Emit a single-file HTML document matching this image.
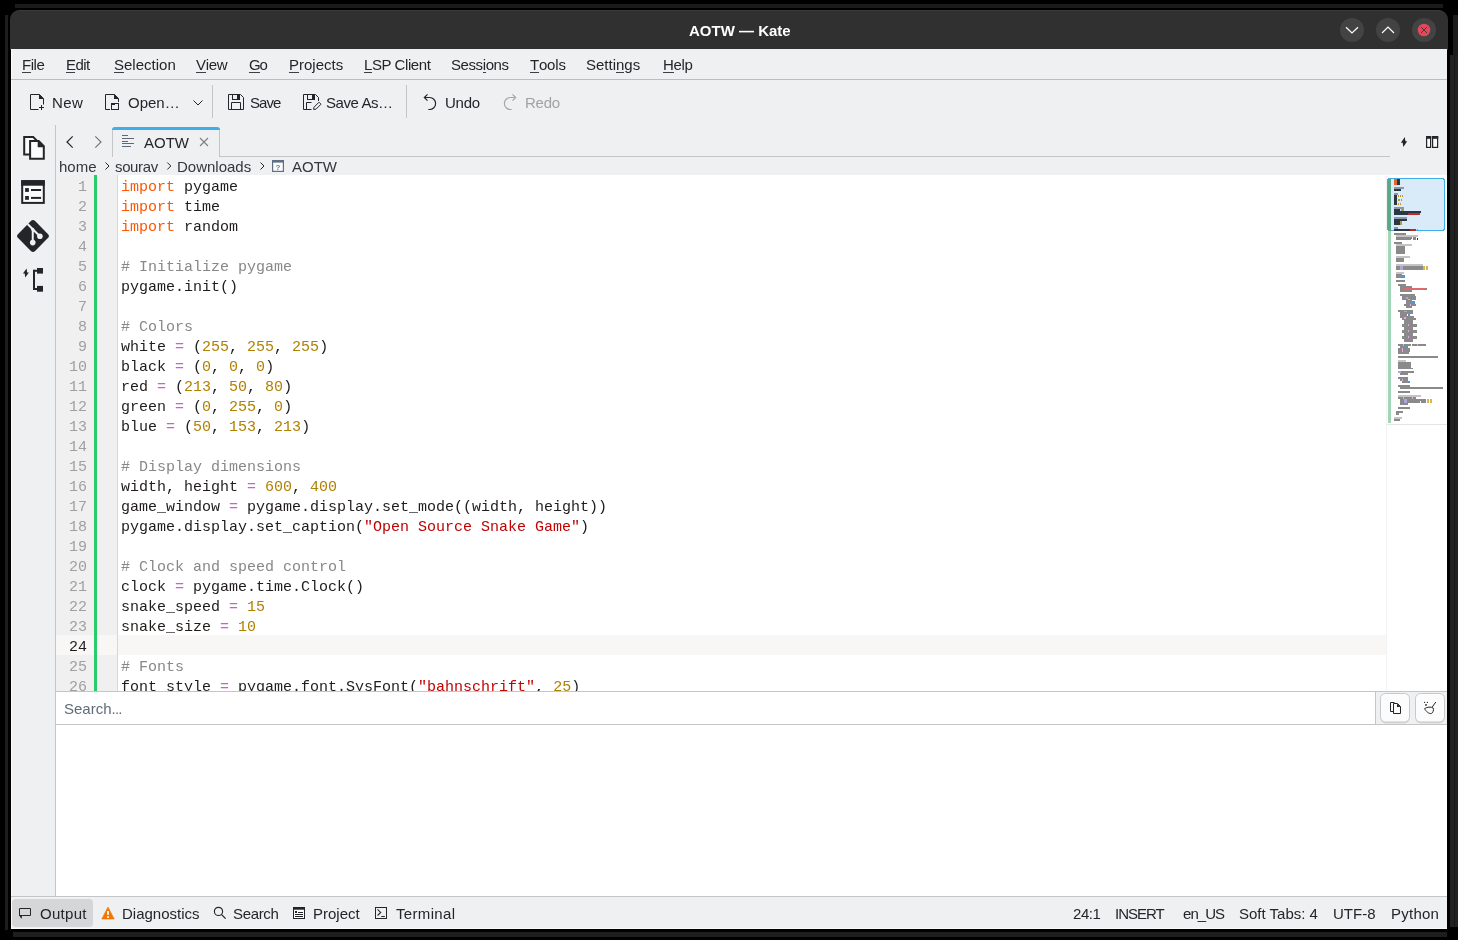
<!DOCTYPE html>
<html><head><meta charset="utf-8">
<style>
*{margin:0;padding:0;box-sizing:border-box}
html,body{width:1458px;height:940px;overflow:hidden;background:#000}
body{position:relative;font-family:"Liberation Sans",sans-serif;color:#232629}
.a{position:absolute}
.t{position:absolute;font-size:15px;line-height:17px;white-space:pre;color:#232629;will-change:transform}
.win{position:absolute;left:10px;top:10px;width:1437px;height:919px;background:#eff0f1;border-radius:8px 8px 0 0;overflow:hidden}
.title{position:absolute;left:0;top:0;width:1437px;height:39px;background:#303030}
.hl{position:absolute;height:1px;background:#c4c5c6}
.vl{position:absolute;width:1px;background:#c4c5c6}
.code{will-change:transform;position:absolute;left:121px;top:177px;font-family:"Liberation Mono",monospace;font-size:15px;line-height:20px;white-space:pre;color:#1f1c1b}
.ln{will-change:transform;position:absolute;left:56px;width:31px;top:178px;font-family:"Liberation Mono",monospace;font-size:15px;line-height:20px;text-align:right;color:#a0a0a0;white-space:pre}
.k{color:#ff5500}.c{color:#898887}.n{color:#b08000}.o{color:#ca60ca}.s{color:#bf0303}
.u{position:relative}.u::after{content:"";position:absolute;left:0;right:0;top:16px;height:1px;background:#3c3f42}
</style></head><body>
<!-- shadows -->
<div class="a" style="left:15px;top:4px;width:1428px;height:4px;background:#1b1b1b"></div>
<div class="a" style="left:5px;top:15px;width:3px;height:915px;background:#1d1d1d"></div>
<div class="a" style="left:1453px;top:15px;width:5px;height:40px;background:#1c1c1c"></div>
<div class="a" style="left:1450px;top:55px;width:8px;height:872px;background:#212121"></div>
<div class="a" style="left:1454px;top:55px;width:1px;height:872px;background:#171717"></div>
<div class="a" style="left:13px;top:932px;width:1434px;height:5px;background:#1e1e1e"></div>

<!-- title bar -->
<div class="a" style="left:10px;top:10px;width:1438px;height:40px;background:#303030;border-radius:10px 10px 0 0;box-shadow:inset 0 1px 0 #3a3a3a"></div>
<div class="t" style="left:689.0px;top:22px;color:#fff;font-weight:bold">AOTW — Kate</div>

<!-- window body -->
<div class="a" style="left:11px;top:49px;width:1436px;height:880px;background:#eff0f1;box-shadow:inset 1px 0 0 #fafafa, inset 0 -1px 0 #fafafa"></div>

<!-- menu -->
<div class="t" style="left:22.4px;top:56px;letter-spacing:-0.47px"><span class="u">F</span>ile</div>
<div class="t" style="left:66.0px;top:56px;letter-spacing:-0.57px"><span class="u">E</span>dit</div>
<div class="t" style="left:114.0px;top:56px"><span class="u">S</span>election</div>
<div class="t" style="left:196.0px;top:56px;letter-spacing:-0.30px"><span class="u">V</span>iew</div>
<div class="t" style="left:249.4px;top:56px;letter-spacing:-1.10px"><span class="u">G</span>o</div>
<div class="t" style="left:289.4px;top:56px"><span class="u">P</span>rojects</div>
<div class="t" style="left:363.8px;top:56px;letter-spacing:-0.42px"><span class="u">L</span>SP Client</div>
<div class="t" style="left:451.1px;top:56px;letter-spacing:-0.41px">Sess<span class="u">i</span>ons</div>
<div class="t" style="left:530.0px;top:56px;letter-spacing:-0.20px"><span class="u">T</span>ools</div>
<div class="t" style="left:586.1px;top:56px">Setti<span class="u">n</span>gs</div>
<div class="t" style="left:662.9px;top:56px;letter-spacing:-0.33px"><span class="u">H</span>elp</div>
<div class="hl" style="left:11px;top:79px;width:1436px;background:#bcbdbf"></div>

<!-- toolbar -->
<div class="t" style="left:51.9px;top:94px;letter-spacing:0.40px">New</div>
<div class="t" style="left:127.6px;top:94px">Open…</div>
<div class="t" style="left:250.2px;top:94px;letter-spacing:-0.97px">Save</div>
<div class="t" style="left:326.3px;top:94px;letter-spacing:-0.43px">Save As…</div>
<div class="t" style="left:444.5px;top:94px;letter-spacing:-0.23px">Undo</div>
<div class="t" style="left:524.5px;top:94px;color:#a0a2a4;letter-spacing:-0.23px">Redo</div>
<div class="vl" style="left:212px;top:85px;height:33px"></div>
<div class="vl" style="left:406px;top:85px;height:33px"></div>

<!-- sidebar sep -->
<div class="vl" style="left:55px;top:125px;height:772px"></div>

<!-- tab bar -->
<div class="hl" style="left:219px;top:156px;width:1171px"></div>
<div class="a" style="left:112px;top:127px;width:108px;height:30px;background:#eff0f1;border:1px solid #c4c5c6;border-bottom:none;border-radius:4px 4px 0 0"></div>
<div class="a" style="left:112px;top:127px;width:108px;height:3px;background:#3daee9;border-radius:4px 4px 0 0"></div>
<div class="t" style="left:144px;top:134px">AOTW</div>

<!-- breadcrumbs -->
<div class="t" style="left:59.4px;top:158px;color:#34373b">home</div>
<div class="t" style="left:115.4px;top:158px;letter-spacing:-0.36px;color:#34373b">sourav</div>
<div class="t" style="left:176.6px;top:158px;color:#34373b">Downloads</div>
<div class="t" style="left:292px;top:158px;color:#34373b">AOTW</div>

<!-- editor -->
<div class="a" style="left:56px;top:175px;width:62px;height:516px;background:#f0f0f0"></div>
<div class="a" style="left:118px;top:175px;width:1269px;height:516px;background:#fff"></div>
<div class="a" style="left:56px;top:635px;width:1331px;height:20px;background:#f8f7f6"></div>
<div class="a" style="left:94px;top:175px;width:3px;height:516px;background:#28cc6c"></div>
<div class="vl" style="left:117px;top:175px;height:516px;background:#d7d7d7"></div>
<div class="a" style="left:1387px;top:175px;width:60px;height:516px;background:#fff"></div>

<div class="ln">1
2
3
4
5
6
7
8
9
10
11
12
13
14
15
16
17
18
19
20
21
22
23
<span style="color:#1f1c1b">24</span>
25
26</div>
<div class="a" style="left:118px;top:175px;width:1269px;height:516px;overflow:hidden">
<div class="code" style="left:3px;top:3px"><span class="k">import</span> pygame
<span class="k">import</span> time
<span class="k">import</span> random

<span class="c"># Initialize pygame</span>
pygame.init()

<span class="c"># Colors</span>
white <span class="o">=</span> (<span class="n">255</span>, <span class="n">255</span>, <span class="n">255</span>)
black <span class="o">=</span> (<span class="n">0</span>, <span class="n">0</span>, <span class="n">0</span>)
red <span class="o">=</span> (<span class="n">213</span>, <span class="n">50</span>, <span class="n">80</span>)
green <span class="o">=</span> (<span class="n">0</span>, <span class="n">255</span>, <span class="n">0</span>)
blue <span class="o">=</span> (<span class="n">50</span>, <span class="n">153</span>, <span class="n">213</span>)

<span class="c"># Display dimensions</span>
width, height <span class="o">=</span> <span class="n">600</span>, <span class="n">400</span>
game_window <span class="o">=</span> pygame.display.set_mode((width, height))
pygame.display.set_caption(<span class="s">"Open Source Snake Game"</span>)

<span class="c"># Clock and speed control</span>
clock <span class="o">=</span> pygame.time.Clock()
snake_speed <span class="o">=</span> <span class="n">15</span>
snake_size <span class="o">=</span> <span class="n">10</span>

<span class="c"># Fonts</span>
font_style <span class="o">=</span> pygame.font.SysFont(<span class="s">"bahnschrift"</span>, <span class="n">25</span>)</div>
</div>
<div class="hl" style="left:56px;top:691px;width:1391px"></div>

<!-- search bar -->
<div class="a" style="left:56px;top:692px;width:1320px;height:32px;background:#fff"></div>
<div class="vl" style="left:1375px;top:692px;height:32px"></div>
<div class="t" style="left:64px;top:700px;color:#5f6c7a">Search<span style="letter-spacing:-0.8px">...</span></div>
<div class="hl" style="left:56px;top:724px;width:1391px"></div>
<div class="a" style="left:56px;top:725px;width:1391px;height:171px;background:#fff"></div>

<!-- status bar -->
<div class="hl" style="left:11px;top:896px;width:1436px"></div>
<div class="a" style="left:12px;top:899px;width:81px;height:28px;background:#d5d6d8;border-radius:4px"></div>
<div class="t" style="left:40.2px;top:905px;letter-spacing:0.3px">Output</div>
<div class="t" style="left:121.8px;top:905px">Diagnostics</div>
<div class="t" style="left:233.0px;top:905px;letter-spacing:-0.34px">Search</div>
<div class="t" style="left:313.0px;top:905px">Project</div>
<div class="t" style="left:396.3px;top:905px;letter-spacing:0.33px">Terminal</div>
<div class="t" style="left:1072.6px;top:905px;letter-spacing:-0.45px">24:1</div>
<div class="t" style="left:1115.2px;top:905px;letter-spacing:-1.02px">INSERT</div>
<div class="t" style="left:1182.5px;top:905px;letter-spacing:-0.95px">en_US</div>
<div class="t" style="left:1238.8px;top:905px">Soft Tabs: 4</div>
<div class="t" style="left:1333.2px;top:905px">UTF-8</div>
<div class="t" style="left:1391.3px;top:905px;letter-spacing:0.24px">Python</div>

<!-- minimap -->
<svg class="a" style="left:0;top:0" width="1458" height="940" shape-rendering="crispEdges">
<rect x="1387" y="424" width="60" height="1" fill="#e6e6e6"/>
<rect x="1386" y="175" width="1" height="516" fill="#f3f3f3"/>
<rect x="1387.5" y="178.5" width="57" height="52" rx="3" fill="#d9ebf8" stroke="#3daee9" stroke-width="1.2"/>
<rect x="1388" y="179" width="3" height="52" fill="#5da78a"/>
<rect x="1388" y="231" width="3" height="192" fill="#a3d5b7"/>
<rect x="1394" y="179" width="3" height="6" fill="#e0692a"/><rect x="1397" y="179" width="3" height="6" fill="#2a3744"/><rect x="1394" y="187" width="10" height="2" fill="#8a98a6"/><rect x="1394" y="189" width="7" height="2" fill="#2a3744"/><rect x="1394" y="193" width="4" height="2" fill="#8a98a6"/><rect x="1394" y="195" width="3" height="2" fill="#2a3744"/><rect x="1394" y="197" width="3" height="2" fill="#2a3744"/><rect x="1394" y="199" width="3" height="2" fill="#2a3744"/><rect x="1394" y="201" width="3" height="2" fill="#2a3744"/><rect x="1394" y="203" width="3" height="2" fill="#2a3744"/><rect x="1398" y="195" width="1" height="2" fill="#c09a30"/><rect x="1400" y="195" width="1" height="2" fill="#c09a30"/><rect x="1402" y="195" width="1" height="2" fill="#c09a30"/><rect x="1398" y="199" width="2" height="2" fill="#c09a30"/><rect x="1401" y="199" width="1" height="2" fill="#c09a30"/><rect x="1398" y="203" width="1" height="2" fill="#c09a30"/><rect x="1400" y="203" width="1" height="2" fill="#c09a30"/><rect x="1394" y="207" width="10" height="2" fill="#8a98a6"/><rect x="1394" y="209" width="6" height="2" fill="#2a3744"/><rect x="1401" y="209" width="3" height="2" fill="#c09a30"/><rect x="1394" y="211" width="27" height="2" fill="#2a3744"/><rect x="1394" y="213" width="14" height="2" fill="#2a3744"/><rect x="1408" y="213" width="12" height="2" fill="#c0282a"/><rect x="1394" y="217" width="13" height="2" fill="#8a98a6"/><rect x="1394" y="219" width="13" height="2" fill="#2a3744"/><rect x="1394" y="221" width="6" height="2" fill="#2a3744"/><rect x="1400" y="221" width="2" height="2" fill="#c09a30"/><rect x="1394" y="223" width="6" height="2" fill="#2a3744"/><rect x="1400" y="223" width="2" height="2" fill="#c09a30"/><rect x="1394" y="227" width="4" height="2" fill="#8a98a6"/><rect x="1394" y="229" width="16" height="2" fill="#2a3744"/><rect x="1410" y="229" width="6" height="2" fill="#c0282a"/><rect x="1417" y="229" width="1" height="2" fill="#c09a30"/><rect x="1394" y="233" width="12" height="2" fill="#8a8a8a"/><rect x="1396" y="235" width="22" height="2" fill="#c4c4c4"/><rect x="1396" y="237" width="15" height="3" fill="#8a8a8a"/><rect x="1411" y="237" width="1" height="2" fill="#4f95dd"/><rect x="1413" y="237" width="3" height="3" fill="#8a8a8a"/><rect x="1417" y="238" width="1" height="2" fill="#333"/><rect x="1394" y="242" width="8" height="2" fill="#8a8a8a"/><rect x="1396" y="244" width="16" height="2" fill="#c4c4c4"/><rect x="1396" y="246" width="9" height="8" fill="#8a8a8a"/><rect x="1396" y="256" width="14" height="2" fill="#c4c4c4"/><rect x="1396" y="258" width="8" height="4" fill="#8a8a8a"/><rect x="1396" y="264" width="27" height="2" fill="#c4c4c4"/><rect x="1396" y="266" width="27" height="4" fill="#8a8a8a"/><rect x="1400" y="266" width="3" height="4" fill="#b3a3dc"/><rect x="1423" y="266" width="2" height="4" fill="#dcb454"/><rect x="1426" y="266" width="2" height="4" fill="#dcb454"/><rect x="1396" y="272" width="8" height="2" fill="#c4c4c4"/><rect x="1396" y="274" width="6" height="4" fill="#8a8a8a"/><rect x="1402" y="275" width="3" height="3" fill="#4f95dd"/><rect x="1396" y="280" width="9" height="2" fill="#8a8a8a"/><rect x="1398" y="284" width="8" height="2" fill="#8a8a8a"/><rect x="1400" y="286" width="12" height="6" fill="#8a8a8a"/><rect x="1404" y="288" width="21" height="2" fill="#e06a6a"/><rect x="1425" y="288" width="2" height="2" fill="#8a8a8a"/><rect x="1400" y="294" width="15" height="2" fill="#8a8a8a"/><rect x="1402" y="296" width="14" height="4" fill="#8a8a8a"/><rect x="1406" y="297" width="2" height="2" fill="#b3a3dc"/><rect x="1408" y="299" width="2" height="2" fill="#e6a6e6"/><rect x="1406" y="300" width="6" height="8" fill="#8a8a8a"/><rect x="1412" y="301" width="3" height="4" fill="#4f95dd"/><rect x="1404" y="304" width="12" height="2" fill="#8a8a8a"/><rect x="1410" y="304" width="1" height="2" fill="#e6a6e6"/><rect x="1398" y="310" width="15" height="2" fill="#8a8a8a"/><rect x="1404" y="311" width="3" height="2" fill="#b3a3dc"/><rect x="1400" y="312" width="13" height="2" fill="#8a8a8a"/><rect x="1400" y="314" width="7" height="2" fill="#8a8a8a"/><rect x="1408" y="314" width="2" height="2" fill="#4f95dd"/><rect x="1400" y="316" width="14" height="2" fill="#8a8a8a"/><rect x="1402" y="318" width="14" height="2" fill="#8a8a8a"/><rect x="1404" y="317" width="2" height="2" fill="#e6a6e6"/><rect x="1404" y="320" width="9" height="22" fill="#8a8a8a"/><rect x="1402" y="324" width="15" height="3" fill="#8a8a8a"/><rect x="1408" y="324" width="1" height="2" fill="#e6a6e6"/><rect x="1402" y="330" width="15" height="3" fill="#8a8a8a"/><rect x="1408" y="330" width="1" height="2" fill="#e6a6e6"/><rect x="1402" y="336" width="15" height="3" fill="#8a8a8a"/><rect x="1408" y="336" width="1" height="2" fill="#e6a6e6"/><rect x="1398" y="344" width="13" height="2" fill="#8a8a8a"/><rect x="1412" y="344" width="14" height="2" fill="#8a8a8a"/><rect x="1403" y="344" width="1" height="2" fill="#e6a6e6"/><rect x="1417" y="344" width="1" height="2" fill="#e6a6e6"/><rect x="1400" y="346" width="6" height="2" fill="#8a8a8a"/><rect x="1406" y="346" width="2" height="2" fill="#4f95dd"/><rect x="1398" y="348" width="12" height="4" fill="#8a8a8a"/><rect x="1398" y="352" width="11" height="2" fill="#8a8a8a"/><rect x="1402" y="348" width="1" height="4" fill="#e6a6e6"/><rect x="1398" y="356" width="40" height="2" fill="#8a8a8a"/><rect x="1398" y="360" width="8" height="2" fill="#c4c4c4"/><rect x="1398" y="362" width="13" height="6" fill="#8a8a8a"/><rect x="1398" y="368" width="15" height="1" fill="#8a8a8a"/><rect x="1398" y="371" width="16" height="2" fill="#8a8a8a"/><rect x="1398" y="371" width="3" height="2" fill="#b3a3dc"/><rect x="1400" y="373" width="8" height="2" fill="#8a8a8a"/><rect x="1398" y="377" width="10" height="2" fill="#8a8a8a"/><rect x="1400" y="379" width="8" height="2" fill="#8a8a8a"/><rect x="1402" y="379" width="1" height="2" fill="#e6a6e6"/><rect x="1402" y="381" width="6" height="2" fill="#8a8a8a"/><rect x="1408" y="381" width="2" height="2" fill="#4f95dd"/><rect x="1398" y="385" width="12" height="2" fill="#8a8a8a"/><rect x="1400" y="387" width="43" height="2" fill="#8a8a8a"/><rect x="1398" y="391" width="12" height="2" fill="#8a8a8a"/><rect x="1398" y="395" width="23" height="2" fill="#c4c4c4"/><rect x="1398" y="397" width="18" height="2" fill="#8a8a8a"/><rect x="1403" y="397" width="1" height="2" fill="#e6a6e6"/><rect x="1412" y="397" width="1" height="2" fill="#e6a6e6"/><rect x="1400" y="399" width="26" height="4" fill="#8a8a8a"/><rect x="1420" y="401" width="1" height="2" fill="#fff"/><rect x="1404" y="399" width="3" height="4" fill="#b3a3dc"/><rect x="1427" y="399" width="2" height="4" fill="#dcb454"/><rect x="1430" y="399" width="2" height="4" fill="#dcb454"/><rect x="1400" y="403" width="8" height="2" fill="#8a8a8a"/><rect x="1398" y="407" width="12" height="2" fill="#8a8a8a"/><rect x="1396" y="411" width="7" height="2" fill="#8a8a8a"/><rect x="1396" y="413" width="3" height="2" fill="#8a8a8a"/><rect x="1394" y="417" width="8" height="2" fill="#c4c4c4"/><rect x="1394" y="419" width="6" height="2" fill="#8a8a8a"/>
</svg>
<svg class="a" style="left:0;top:0" width="1458" height="940">
<!-- window buttons -->
<circle cx="1352" cy="30" r="12" fill="#434343"/>
<circle cx="1388" cy="30" r="12" fill="#434343"/>
<circle cx="1424" cy="30" r="12" fill="#434343"/>
<path d="M1346,27.2 L1352,33 L1358,27.2" fill="none" stroke="#fff" stroke-width="1.2"/>
<path d="M1382,33 L1388,27 L1394,33" fill="none" stroke="#fff" stroke-width="1.2"/>
<circle cx="1424" cy="30" r="6.3" fill="#e2485c"/>
<path d="M1421,27 L1427,33 M1427,27 L1421,33" stroke="#3a3a3a" stroke-width="0.9"/>

<g fill="none" stroke="#232629" stroke-width="1">
<!-- New -->
<path d="M30.5,94.5 H39.5 L43.5,98.5 V104.5 M30.5,94.5 V109.5 H38.5" />
<path d="M41.5,105 V110 M39,107.5 H44"/>
<!-- Open -->
<path d="M105.5,94.5 V109.5 H110 M105.5,94.5 H114.5 L118.5,98.5 V102"/>
<rect x="111.5" y="103.5" width="7" height="6"/>
<!-- chevron -->
<path d="M193.5,100.5 L198,105 L202.5,100.5"/>
<!-- Save -->
<path d="M228.5,94.5 H240.5 L243.5,97.5 V109.5 H228.5 Z"/>
<rect x="232.5" y="94.5" width="7" height="5"/>
<path d="M231.5,109.5 V102.5 H240.5 V109.5"/>
<!-- Save As -->
<path d="M311.5,109.5 H303.5 V94.5 H315.5 L318.5,97.5 V101"/>
<rect x="307.5" y="94.5" width="7" height="5"/>
<path d="M306.5,109.5 V102.5 H311.5"/>
<path d="M313.6,109.4 L314,107.2 L319,102.2 L321,104.2 L316,109.2 Z"/>
<!-- Undo -->
<path d="M427.5,94.3 L424.3,97.5 L427.5,100.7 M424.3,97.5 H429.6 A6,6 0 0 1 429.6,109.5 H428.3" stroke-width="1.2"/>
<!-- back arrow -->
<path d="M72.7,136.3 L67,142 L72.7,147.7" stroke-width="1.2"/>
<!-- breadcrumb > -->
<path d="M105.5,162.5 L109,166 L105.5,169.5 M167.3,162.5 L170.8,166 L167.3,169.5 M260.5,162.5 L264,166 L260.5,169.5"/>
</g>
<path d="M512.5,94.3 L515.7,97.5 L512.5,100.7 M515.7,97.5 H510.4 A6,6 0 0 0 510.4,109.5 H511.7" fill="none" stroke="#a5a7a9" stroke-width="1.2"/>
<path d="M95.3,136.3 L101,142 L95.3,147.7" fill="none" stroke="#75787b" stroke-width="1.2"/>
<g fill="#232629">
<path d="M39,94 L44,99 L39,99 Z"/>
<path d="M114,94 L119,99 L114,99 Z"/>
<rect x="111" y="103" width="4" height="2"/>
<rect x="237" y="95" width="2.5" height="4.5"/>
<rect x="312" y="95" width="2.5" height="4.5"/>
</g>
<!-- tab doc icon -->
<g fill="#5b697a">
<rect x="122" y="141" width="6" height="1"/>
<rect x="122" y="135" width="6" height="1"/>
<rect x="122" y="138" width="12" height="1"/>
<rect x="122" y="143" width="12" height="1"/>
<rect x="122" y="146" width="9" height="1"/>
</g>
<path d="M200,138 L208,146 M208,138 L200,146" stroke="#7c7f82" stroke-width="1.1"/>
<!-- lightning / split -->
<path d="M1404.8,137.1 L1400.9,142.7 L1405.6,142.5 Z M1403.3,146.9 L1407.2,141.2 L1402.5,141.4 Z" fill="#232629"/>
<g fill="#fcfcfc" stroke="#232629" stroke-width="1.2">
<rect x="1426.6" y="136.6" width="4" height="10.8"/>
<rect x="1432.6" y="136.6" width="5" height="10.8"/>
</g>
<rect x="1426" y="136" width="5.2" height="2.8" fill="#232629"/>
<rect x="1432" y="136" width="6.2" height="2.8" fill="#232629"/>
<!-- breadcrumb file icon -->
<rect x="272.6" y="160.6" width="10.8" height="10.8" fill="#fcfcfc" stroke="#5f7082" stroke-width="1.2"/>
<rect x="272" y="160" width="12" height="2.6" fill="#5f7082"/>
<text x="278" y="170" font-family="Liberation Sans" font-size="8" font-weight="bold" fill="#6d7c8c" text-anchor="middle">?</text>

<!-- sidebar icons -->
<g stroke="#232629" stroke-width="2" fill="#fcfcfc">
<path d="M24.2,137.1 H33.2 L38,141.9 V154.5 H24.2 Z"/>
<path d="M30.1,141 H38.7 L43.8,146.1 V158.8 H30.1 Z"/>
<rect x="22.2" y="181.2" width="21.6" height="21.7"/>
</g>
<g fill="#232629">
<path d="M37.7,140 L44.8,147.2 L37.7,147.2 Z"/>
<rect x="21.2" y="180.2" width="23.6" height="5.5"/>
<rect x="25.1" y="188.1" width="3.8" height="3.8"/>
<rect x="25.1" y="196" width="3.8" height="3.8"/>
<rect x="31" y="189" width="10.1" height="2"/>
<rect x="31" y="196.9" width="10.1" height="2"/>
<path d="M30.88,221.12 Q33,219 35.12,221.12 L47.88,233.88 Q50,236 47.88,238.12 L35.12,250.88 Q33,253 30.88,250.88 L18.12,238.12 Q16,236 18.12,233.88 Z"/>
</g>
<g stroke="#eff0f1" stroke-width="2" fill="#eff0f1">
<path d="M27.6,224 L32.75,229.2 V242.6 M32.75,229.2 L39.9,236.3" fill="none"/>
<circle cx="32.75" cy="229.4" r="1.6" stroke="none"/>
<circle cx="32.75" cy="242.6" r="2.8" stroke="none"/>
<circle cx="39.9" cy="236.3" r="2.8" stroke="none"/>
</g>
<g fill="#232629">
<path d="M26.6,268.4 L22.9,273.5 L27.2,273.3 Z M25.2,277.5 L28.9,272.4 L24.6,272.6 Z"/>
<rect x="33" y="269.8" width="2" height="20.2"/>
<rect x="33" y="269.8" width="5" height="2"/>
<rect x="33" y="288" width="5" height="2"/>
<rect x="37" y="268" width="6" height="5.6"/>
<rect x="37" y="285.9" width="6" height="5.8"/>
</g>

<!-- search panel buttons -->
<rect x="1380.5" y="694.5" width="29" height="29" rx="5" fill="#d6d7d9"/>
<rect x="1380.5" y="693.5" width="29" height="28.5" rx="5" fill="#fcfcfc" stroke="#c8c9cb"/>
<rect x="1415.5" y="694.5" width="29" height="29" rx="5" fill="#d6d7d9"/>
<rect x="1415.5" y="693.5" width="29" height="28.5" rx="5" fill="#fcfcfc" stroke="#c8c9cb"/>
<g fill="none" stroke="#232629" stroke-width="1">
<path d="M1393.5,711.5 H1390.5 V702.5 H1394.5"/>
<path d="M1393.5,703.5 H1397.5 L1400.5,706.5 V713.5 H1393.5 Z"/>
<path d="M1435.8,702 L1432.3,707 M1424.6,708.6 C1427,707 1431,706.5 1433.2,708 C1434,710 1433,713 1431.2,713.6 C1429,714 1425.5,711 1424.6,708.6 Z"/>
</g>
<path d="M1397,703.5 L1400.5,707 L1397,707 Z" fill="#232629"/>
<circle cx="1424.6" cy="702.4" r="0.6" fill="#232629"/>
<circle cx="1427.4" cy="702.4" r="0.6" fill="#232629"/>
<circle cx="1426" cy="704.9" r="0.9" fill="#232629"/>

<!-- status icons -->
<g fill="none" stroke="#232629" stroke-width="1">
<path d="M21.6,915.5 H19.5 V908.5 H30.5 V915.5 H22.2"/>
<circle cx="218.5" cy="911.4" r="4.1" stroke-width="1.15"/>
<path d="M221.6,914.6 L225.6,918.6" stroke-width="1.3"/>
<rect x="293.5" y="907.5" width="11" height="11" fill="#fcfcfc"/>
<rect x="375.5" y="907.5" width="11" height="11"/>
<path d="M377.5,909.4 L380.7,912.4 L377.5,915.5" stroke-width="1.1"/>
</g>
<path d="M19,915 L21.4,919 L22.4,915 Z" fill="#232629"/>
<g fill="#232629">
<rect x="293" y="907" width="12" height="2.7"/>
<rect x="295" y="911" width="2" height="2"/>
<rect x="298" y="912" width="5" height="1"/>
<rect x="295" y="914" width="8" height="1"/>
<rect x="295" y="916" width="8" height="1"/>
<rect x="381.3" y="916" width="3.5" height="1"/>
</g>
<path d="M108,907 L114.2,919 L101.8,919 Z" fill="#f67400" stroke="#f67400" stroke-width="0.6" stroke-linejoin="round"/>
<rect x="107.1" y="911" width="1.8" height="3.8" fill="#fff"/>
<rect x="107.1" y="916.2" width="1.8" height="1.7" fill="#fff"/>

</svg>
</body></html>
